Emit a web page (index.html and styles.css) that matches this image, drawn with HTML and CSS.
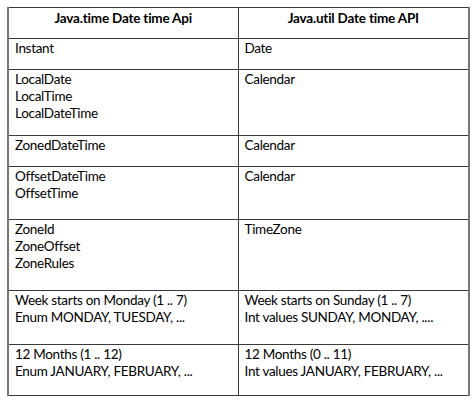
FILE: index.html
```html
<!DOCTYPE html>
<html>
<head>
<meta charset="utf-8">
<link rel="stylesheet" href="styles.css">
</head>
<body>
<table class="cmp">
  <colgroup><col class="c1"><col class="c2"></colgroup>
  <tr class="r-head"><th>Java.time Date time Api</th><th>Java.util Date time API</th></tr>
  <tr class="r-instant"><td>Instant</td><td>Date</td></tr>
  <tr class="r-local"><td>LocalDate<br>LocalTime<br>LocalDateTime</td><td>Calendar</td></tr>
  <tr class="r-zoned"><td>ZonedDateTime</td><td>Calendar</td></tr>
  <tr class="r-offset"><td>OffsetDateTime<br>OffsetTime</td><td>Calendar</td></tr>
  <tr class="r-zone"><td>ZoneId<br>ZoneOffset<br>ZoneRules</td><td>TimeZone</td></tr>
  <tr class="r-week"><td>Week starts on Monday (1 .. 7)<br>Enum MONDAY, TUESDAY, ...</td><td>Week starts on Sunday (1 .. 7)<br>Int values SUNDAY, MONDAY, ....</td></tr>
  <tr class="r-month"><td>12 Months (1 .. 12)<br>Enum JANUARY, FEBRUARY, ...</td><td>12 Months (0 .. 11)<br>Int values JANUARY, FEBRUARY, ...</td></tr>
</table>
</body>
</html>
```
FILE: styles.css
```css
html, body {
  margin: 0;
  padding: 0;
  background: #ffffff;
}
body {
  padding: 7px 0 0 7px;
  font-family: Lato, "Open Sans", sans-serif;
  font-size: 13.5px;
  letter-spacing: -0.3px;
  color: #000000;
}
.cmp {
  border-collapse: collapse;
  width: 461px;
  table-layout: fixed;
}
.c1 { width: 230px; }
.c2 { width: 231px; }
.cmp th, .cmp td {
  border: 1px solid #3a3a3a;
  vertical-align: top;
  text-align: left;
  padding: 1px 6px 0 6px;
  line-height: 17px;
  white-space: nowrap;
}
.cmp tr > :first-child { border-left: 2px solid #777777; }
.cmp tr > :last-child { border-right: 2px solid #777777; }
.cmp th {
  text-align: center;
  font-weight: bold;
  letter-spacing: -0.2px;
  padding-top: 2px;
}
.r-head { height: 31px; }
.r-instant { height: 31px; }
.r-local { height: 66px; }
.r-zoned { height: 31px; }
.r-offset { height: 53px; }
.r-zone { height: 71px; }
.r-week { height: 54px; }
.r-month { height: 51px; }
```
